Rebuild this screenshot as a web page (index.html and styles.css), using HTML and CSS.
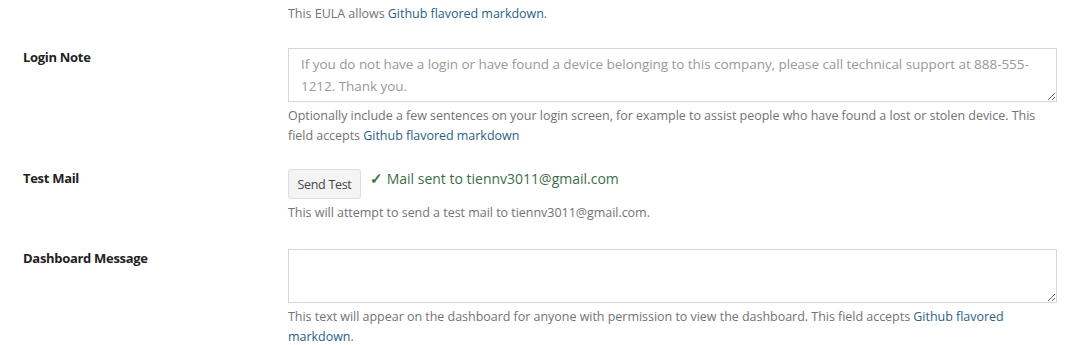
FILE: index.html
```html
<!DOCTYPE html>
<html>
<head>
<meta charset="utf-8">
<link rel="stylesheet" href="styles.css">
</head>
<body>
<div class="settings">
  <div class="form-group first">
    <div class="label-col"></div>
    <div class="control-col">
      <p class="help">This EULA allows <a href="#">Github flavored markdown</a>.</p>
    </div>
  </div>

  <div class="form-group">
    <div class="label-col"><label>Login Note</label></div>
    <div class="control-col">
      <textarea class="input" rows="2" placeholder="If you do not have a login or have found a device belonging to this company, please call technical support at 888-555-1212. Thank you."></textarea>
      <p class="help">Optionally include a few sentences on your login screen, for example to assist people who have found a lost or stolen device. This field accepts <a href="#">Github flavored markdown</a></p>
    </div>
  </div>

  <div class="form-group mail-group">
    <div class="label-col"><label>Test Mail</label></div>
    <div class="control-col">
      <div class="mail-row">
        <button class="btn" type="button">Send Test</button>
        <span class="mail-status"><span class="check">&#10003;</span> Mail sent to tiennv3011@gmail.com</span>
      </div>
      <p class="help">This will attempt to send a test mail to tiennv3011@gmail.com.</p>
    </div>
  </div>

  <div class="form-group">
    <div class="label-col"><label>Dashboard Message</label></div>
    <div class="control-col">
      <textarea class="input" rows="2"></textarea>
      <p class="help">This text will appear on the dashboard for anyone with permission to view the dashboard. This field accepts <a href="#">Github flavored markdown</a>.</p>
    </div>
  </div>
</div>
</body>
</html>
```

FILE: styles.css
```css
html, body {
  margin: 0;
  padding: 0;
  background: #ffffff;
}

body {
  font-family: "Open Sans", "Noto Sans", sans-serif;
  font-size: 13px;
  color: #333333;
}

.settings {
  padding: 4px 25px 0 23px;
}

.form-group {
  display: flex;
  margin-bottom: 23px;
}

.form-group.first {
  margin-bottom: 24px;
}

.form-group.mail-group {
  margin-bottom: 26px;
}

.label-col {
  width: 265px;
  flex: 0 0 265px;
}

.label-col label {
  display: block;
  font-weight: 700;
  font-size: 13px;
  line-height: 20px;
  margin-top: -1px;
  color: #222;
  letter-spacing: -0.3px;
}

.control-col {
  flex: 1 1 auto;
  width: 769px;
}

.help {
  margin: 0;
  color: #737373;
  line-height: 20px;
  font-size: 12.5px;
  letter-spacing: -0.03px;
}

.form-group .input + .help,
.mail-row + .help {
  margin-top: 4px;
}

.help a {
  color: #2a5f86;
  text-decoration: none;
}

.input {
  display: block;
  box-sizing: border-box;
  width: 100%;
  height: 54px;
  margin: 0;
  padding: 4px 12px;
  border: 1px solid #d2d6de;
  border-radius: 0;
  font-family: "Open Sans", "Noto Sans", sans-serif;
  font-size: 13.5px;
  line-height: 22px;
  color: #555;
  resize: vertical;
  letter-spacing: -0.05px;
}

.input::placeholder {
  color: #999999;
}

.mail-row {
  display: flex;
  align-items: flex-start;
}

.btn {
  box-sizing: border-box;
  height: 30px;
  width: 73px;
  padding: 0;
  background: #f4f4f4;
  border: 1px solid #dddddd;
  border-radius: 3px;
  font-family: "Open Sans", "Noto Sans", sans-serif;
  font-size: 12.5px;
  color: #444444;
  letter-spacing: -0.3px;
}

.mail-status {
  margin-left: 9px;
  margin-top: -1px;
  color: #3c6e47;
  line-height: 20px;
  font-size: 14px;
  letter-spacing: 0;
}

.check {
  font-size: 15px;
  font-weight: 700;
}
```
